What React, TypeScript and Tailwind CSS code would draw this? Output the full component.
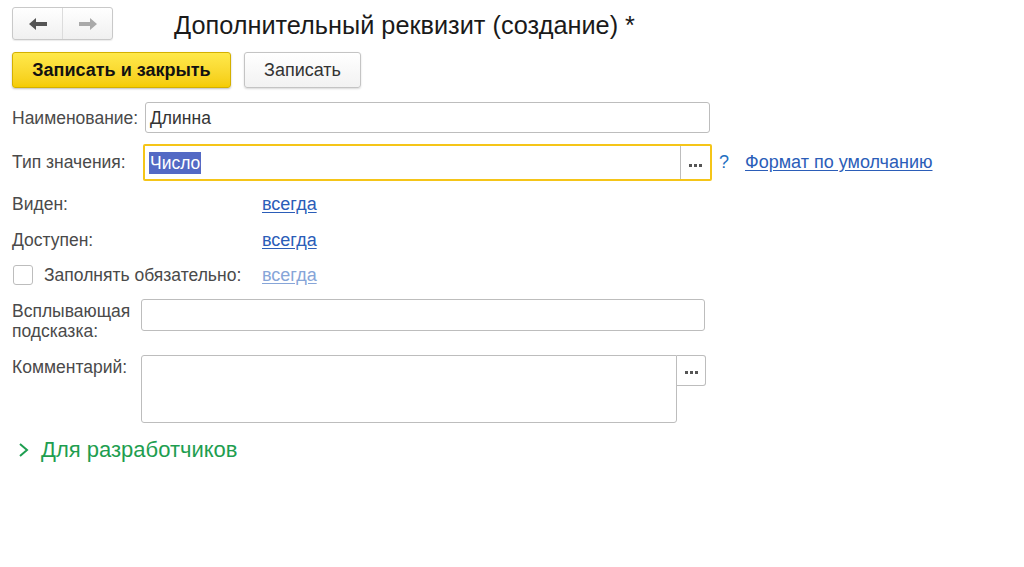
import React from "react";

const font = { fontFamily: '"Liberation Sans", Arial, sans-serif' };

function ArrowLeft({ color }: { color: string }) {
  return (
    <svg width="20" height="14" viewBox="0 0 20 14">
      <path d="M1 7 L8 1 L8 5 L19 5 L19 9 L8 9 L8 13 Z" fill={color} />
    </svg>
  );
}
function ArrowRight({ color }: { color: string }) {
  return (
    <svg width="20" height="14" viewBox="0 0 20 14">
      <path d="M19 7 L12 1 L12 5 L1 5 L1 9 L12 9 L12 13 Z" fill={color} />
    </svg>
  );
}

function Dots() {
  return (
    <span className="flex gap-[2px] items-end">
      <span className="w-[3px] h-[3px] bg-[#555]" />
      <span className="w-[3px] h-[3px] bg-[#555]" />
      <span className="w-[3px] h-[3px] bg-[#555]" />
    </span>
  );
}

export default function App() {
  return (
    <div className="w-[1024px] h-[567px] bg-white text-[17.5px] text-[#4a4a4a] overflow-hidden" style={font}>
      <div className="flex flex-col pl-[12px]">
        {/* header */}
        <div className="flex items-center mt-[7px] h-[33px]">
          <div className="flex h-[33px] w-[101px] rounded-[3px] border border-[#c9c9c9] bg-gradient-to-b from-white to-[#f0f0f0] shadow-[0_1px_1px_rgba(0,0,0,0.08)]">
            <div className="w-[50px] flex items-center justify-center border-r border-[#dcdcdc]">
              <ArrowLeft color="#555555" />
            </div>
            <div className="flex-1 flex items-center justify-center">
              <ArrowRight color="#a9a9a9" />
            </div>
          </div>
          <div className="ml-[61px] text-[25.3px] text-[#1a1a1a] leading-none pt-[4px] whitespace-nowrap">
            Дополнительный реквизит (создание) *
          </div>
        </div>

        {/* command bar */}
        <div className="flex mt-[12px] h-[36px] gap-[13px]">
          <button className="w-[219px] h-[36px] rounded-[3px] border border-[#d4b000] bg-gradient-to-b from-[#ffe94a] to-[#f5cc00] text-[#111] font-bold text-[18px] shadow-[0_1px_2px_rgba(0,0,0,0.25)]">
            Записать и закрыть
          </button>
          <button className="w-[117px] h-[36px] rounded-[3px] border border-[#c4c4c4] bg-gradient-to-b from-white to-[#f2f2f2] text-[#333] text-[18px] shadow-[0_1px_2px_rgba(0,0,0,0.15)]">
            Записать
          </button>
        </div>

        {/* Наименование */}
        <div className="flex items-center mt-[14px] h-[31px]">
          <div className="w-[133px] whitespace-nowrap pt-[1px]">Наименование:</div>
          <div className="w-[565px] h-[31px] rounded-[3px] border border-[#bdbdbd] flex items-center pl-[4px] pt-[1px] text-[#333]">
            Длинна
          </div>
        </div>

        {/* Тип значения */}
        <div className="flex items-center mt-[11px] h-[37px]">
          <div className="w-[131px] whitespace-nowrap">Тип значения:</div>
          <div className="w-[569px] h-[37px] rounded-[2px] border-2 border-[#f5c518] flex items-center">
            <div className="flex-1 pl-[4px] flex items-center">
              <span className="bg-[#5369c4] text-white leading-[22px] px-[1px]">Число</span>
            </div>
            <div className="w-[30px] h-[33px] border-l border-[#bdbdbd] flex items-center justify-center pt-[6px]">
              <Dots />
            </div>
          </div>
          <span className="ml-[7px] text-[#1f70c1] text-[18px]">?</span>
          <a className="ml-[16px] text-[#2b5db8] text-[18px] underline underline-offset-2 whitespace-nowrap" href="#">Формат по умолчанию</a>
        </div>

        {/* Виден */}
        <div className="flex items-center mt-[13px] h-[20px]">
          <div className="w-[250px]">Виден:</div>
          <a className="text-[#2b5db8] text-[18px] underline underline-offset-2" href="#">всегда</a>
        </div>

        {/* Доступен */}
        <div className="flex items-center mt-[16px] h-[20px]">
          <div className="w-[250px]">Доступен:</div>
          <a className="text-[#2b5db8] text-[18px] underline underline-offset-2" href="#">всегда</a>
        </div>

        {/* Заполнять обязательно */}
        <div className="flex items-center mt-[15px] h-[20px]">
          <div className="w-[250px] flex items-center">
            <span className="ml-[1px] w-[20px] h-[20px] rounded-[3px] border border-[#bdbdbd] bg-white" />
            <span className="ml-[11px] whitespace-nowrap">Заполнять обязательно:</span>
          </div>
          <a className="text-[#86a5d8] text-[18px] underline underline-offset-2" href="#">всегда</a>
        </div>

        {/* Всплывающая подсказка */}
        <div className="flex mt-[14px] h-[32px]">
          <div className="w-[129px] leading-[20px] pt-[2px]">
            Всплывающая<br />подсказка:
          </div>
          <div className="w-[564px] h-[32px] rounded-[3px] border border-[#bdbdbd]" />
        </div>

        {/* Комментарий */}
        <div className="flex mt-[24px]">
          <div className="w-[129px] leading-[20px] pt-[2px]">Комментарий:</div>
          <div className="w-[536px] h-[68px] rounded-l-[3px] rounded-br-[3px] border border-[#bdbdbd]" />
          <div className="w-[29px] h-[31px] rounded-r-[3px] border border-l-0 border-[#bdbdbd] flex items-center justify-center pt-[4px]">
            <Dots />
          </div>
        </div>

        {/* Для разработчиков */}
        <div className="flex items-center mt-[15px] h-[22px] text-[#1e9e50] text-[22px]">
          <svg width="12" height="16" viewBox="0 0 12 16" className="ml-[6px] mt-[2px]">
            <path d="M2 2 L9 8 L2 14" fill="none" stroke="#1e9e50" strokeWidth="2" />
          </svg>
          <span className="ml-[11px]">Для разработчиков</span>
        </div>
      </div>
    </div>
  );
}
